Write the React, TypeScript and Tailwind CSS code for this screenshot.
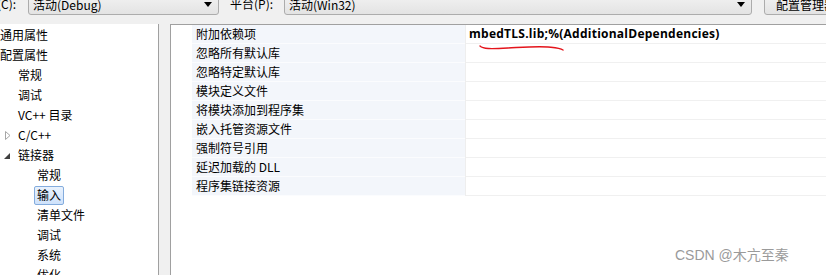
import React from 'react';

const cjk = { fontFamily: '"Noto Sans CJK SC", "Noto Sans", sans-serif' };

type TreeItem = { label: string; level: number; icon?: 'open' | 'closed'; selected?: boolean };

const tree: TreeItem[] = [
  { label: '通用属性', level: 0 },
  { label: '配置属性', level: 0 },
  { label: '常规', level: 1 },
  { label: '调试', level: 1 },
  { label: 'VC++ 目录', level: 1 },
  { label: 'C/C++', level: 1, icon: 'closed' },
  { label: '链接器', level: 1, icon: 'open' },
  { label: '常规', level: 2 },
  { label: '输入', level: 2, selected: true },
  { label: '清单文件', level: 2 },
  { label: '调试', level: 2 },
  { label: '系统', level: 2 },
  { label: '优化', level: 2 },
];

const props = [
  '附加依赖项',
  '忽略所有默认库',
  '忽略特定默认库',
  '模块定义文件',
  '将模块添加到程序集',
  '嵌入托管资源文件',
  '强制符号引用',
  '延迟加载的 DLL',
  '程序集链接资源',
];

const Combo: React.FC<{ text: string; className: string }> = ({ text, className }) => (
  <div
    className={`shrink-0 h-[21px] -mt-[6px] flex items-center justify-between pl-[4px] pr-[6px] border border-[#acacac] rounded-b-[3px] bg-gradient-to-b from-[#f2f2f2] to-[#e3e3e3] text-[12px] text-black ${className}`}
  >
    <span className="leading-none pt-[6px] -mt-[6px]">{text}</span>
    <svg width="8" height="5" viewBox="0 0 8 5" className="-mt-[1px]">
      <path d="M0 0h8L4 5z" fill="#000" />
    </svg>
  </div>
);

export default function App() {
  return (
    <div className="relative w-[826px] h-[275px] overflow-hidden bg-[#f0f0f0] text-[12px] text-black" style={cjk}>
      {/* top bar */}
      <div className="flex items-start h-[24px]">
        <span className="shrink-0 -ml-[3px] w-[31px] leading-[10px] -mt-[1px]">(C):</span>
        <Combo text="活动(Debug)" className="w-[191px]" />
        <span className="shrink-0 ml-[11px] w-[54px] leading-[10px] -mt-[1px]">平台(P):</span>
        <Combo text="活动(Win32)" className="w-[468px]" />
        <div className="shrink-0 ml-[12px] h-[21px] -mt-[6px] w-[80px] border border-[#acacac] rounded-b-[3px] bg-gradient-to-b from-[#f2f2f2] to-[#e3e3e3] pl-[11px] pt-[4px] leading-[12px] whitespace-nowrap">
          配置管理器
        </div>
      </div>

      {/* body */}
      <div className="flex h-[251px]">
        <div className="shrink-0 w-[159px] bg-white border-r border-[#a0a0a0] pt-[1px]">
          {tree.map((t, i) => (
            <div
              key={i}
              className="relative h-[20px] flex items-center whitespace-nowrap"
              style={{ paddingLeft: t.level === 0 ? 0 : t.level === 1 ? 18 : 34 }}
            >
              {t.icon === 'closed' && (
                <svg width="6" height="9" viewBox="0 0 6 9" className="absolute left-[5px] top-[6px]">
                  <path d="M0.5 0.5L5 4.5L0.5 8.5z" fill="none" stroke="#a6a6a6" />
                </svg>
              )}
              {t.icon === 'open' && (
                <svg width="6" height="6" viewBox="0 0 6 6" className="absolute left-[4px] top-[8px]">
                  <path d="M6 0V6H0z" fill="#404040" />
                </svg>
              )}
              {t.selected ? (
                <span className="h-[19px] px-[2px] flex items-center rounded-[2px] border border-[#84acdd] bg-gradient-to-b from-[#e9f2fd] to-[#cfe2fb]">
                  {t.label}
                </span>
              ) : (
                <span className={t.level === 2 ? 'pl-[3px]' : ''}>{t.label}</span>
              )}
            </div>
          ))}
        </div>

        <div className="ml-[11px] flex-1 bg-white border-l border-t border-[#a0a0a0]">
          {props.map((p, i) => (
            <div key={i} className="flex h-[19px]">
              <div className="shrink-0 w-[21px] bg-white" />
              <div className="shrink-0 w-[273px] bg-[#f3f6fb] border-b border-[#fbfcfe] pl-[4px] flex items-center whitespace-nowrap">
                {p}
              </div>
              <div className="shrink-0 w-[1px] bg-[#eeeeee]" />
              <div className="flex-1 border-b border-[#f0f0f0] pl-[3px] flex items-center">
                {i === 0 && (
                  <span className="font-bold text-[12px] tracking-[0.25px] whitespace-nowrap" style={{ fontFamily: '"Open Sans", "Noto Sans", sans-serif' }}>
                    mbedTLS.lib;%(AdditionalDependencies)
                  </span>
                )}
              </div>
            </div>
          ))}
        </div>
      </div>

      {/* red pen mark */}
      <svg className="absolute left-[478px] top-[43px]" width="90" height="10" viewBox="0 0 90 10">
        <path d="M2 3 C5 6, 12 6, 30 5 S60 3, 70 4 S82 5, 85 7" fill="none" stroke="#e4141b" strokeWidth="1.4" strokeLinecap="round" />
      </svg>

      {/* watermark */}
      <div className="absolute left-[675px] top-[246px] text-[14px] text-[#9a9a9a] leading-[18px] whitespace-nowrap" style={{ fontFamily: '"Liberation Sans", "Noto Sans CJK SC", sans-serif' }}>
        CSDN @木亢至秦
      </div>
    </div>
  );
}
